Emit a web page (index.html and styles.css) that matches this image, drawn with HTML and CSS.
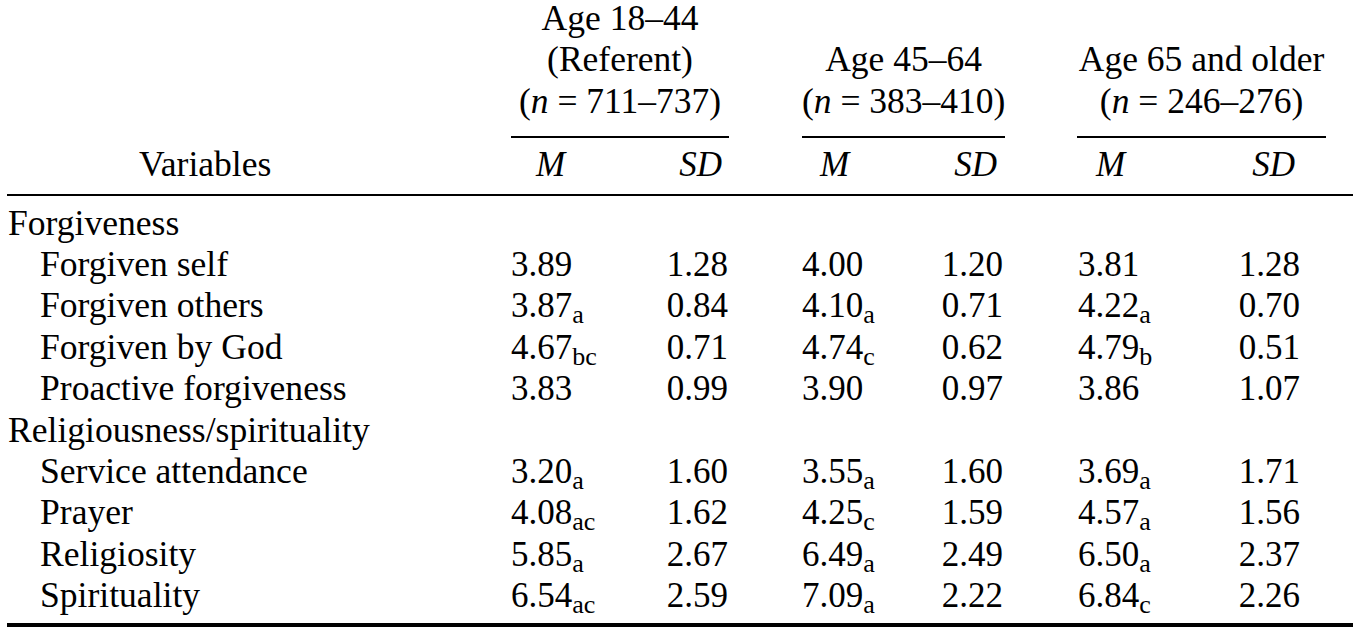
FILE: index.html
```html
<!DOCTYPE html>
<html lang="en">
<head>
<meta charset="utf-8">
<title>Forgiveness and religiousness by age group</title>
<link rel="stylesheet" href="styles.css">
</head>
<body>
<table class="stats">
  <colgroup>
    <col class="c-stub">
    <col class="c-m1"><col class="c-sd1"><col class="c-gap1">
    <col class="c-m2"><col class="c-sd2"><col class="c-gap2">
    <col class="c-m3"><col class="c-sd3"><col class="c-end">
  </colgroup>
  <thead>
    <tr class="group-row">
      <th></th>
      <th colspan="2" class="group g1">Age 18–44<br>(Referent)<br>(<i>n</i> = 711–737)</th>
      <th></th>
      <th colspan="2" class="group g2">Age 45–64<br>(<i>n</i> = 383–410)</th>
      <th></th>
      <th colspan="2" class="group g3">Age 65 and older<br>(<i>n</i> = 246–276)</th>
      <th></th>
    </tr>
    <tr class="stat-row">
      <th class="var-head">Variables</th>
      <th class="mh mh1">M</th><th class="sdh sdh1">SD</th><th></th>
      <th class="mh mh2">M</th><th class="sdh sdh2">SD</th><th></th>
      <th class="mh mh3">M</th><th class="sdh sdh3">SD</th><th></th>
    </tr>
  </thead>
  <tbody>
    <tr class="section first">
      <td class="stub">Forgiveness</td>
      <td></td><td></td><td></td><td></td><td></td><td></td><td></td><td></td><td></td>
    </tr>
    <tr>
      <td class="stub sub">Forgiven self</td>
      <td class="m m1">3.89</td><td class="sd sd1">1.28</td><td></td>
      <td class="m m2">4.00</td><td class="sd sd2">1.20</td><td></td>
      <td class="m m3">3.81</td><td class="sd sd3">1.28</td><td></td>
    </tr>
    <tr>
      <td class="stub sub">Forgiven others</td>
      <td class="m m1">3.87<sub class="s">a</sub></td><td class="sd sd1">0.84</td><td></td>
      <td class="m m2">4.10<sub class="s">a</sub></td><td class="sd sd2">0.71</td><td></td>
      <td class="m m3">4.22<sub class="s">a</sub></td><td class="sd sd3">0.70</td><td></td>
    </tr>
    <tr>
      <td class="stub sub">Forgiven by God</td>
      <td class="m m1">4.67<sub class="s">bc</sub></td><td class="sd sd1">0.71</td><td></td>
      <td class="m m2">4.74<sub class="s">c</sub></td><td class="sd sd2">0.62</td><td></td>
      <td class="m m3">4.79<sub class="s">b</sub></td><td class="sd sd3">0.51</td><td></td>
    </tr>
    <tr>
      <td class="stub sub">Proactive forgiveness</td>
      <td class="m m1">3.83</td><td class="sd sd1">0.99</td><td></td>
      <td class="m m2">3.90</td><td class="sd sd2">0.97</td><td></td>
      <td class="m m3">3.86</td><td class="sd sd3">1.07</td><td></td>
    </tr>
    <tr class="section">
      <td class="stub">Religiousness/spirituality</td>
      <td></td><td></td><td></td><td></td><td></td><td></td><td></td><td></td><td></td>
    </tr>
    <tr>
      <td class="stub sub">Service attendance</td>
      <td class="m m1">3.20<sub class="s">a</sub></td><td class="sd sd1">1.60</td><td></td>
      <td class="m m2">3.55<sub class="s">a</sub></td><td class="sd sd2">1.60</td><td></td>
      <td class="m m3">3.69<sub class="s">a</sub></td><td class="sd sd3">1.71</td><td></td>
    </tr>
    <tr>
      <td class="stub sub">Prayer</td>
      <td class="m m1">4.08<sub class="s">ac</sub></td><td class="sd sd1">1.62</td><td></td>
      <td class="m m2">4.25<sub class="s">c</sub></td><td class="sd sd2">1.59</td><td></td>
      <td class="m m3">4.57<sub class="s">a</sub></td><td class="sd sd3">1.56</td><td></td>
    </tr>
    <tr>
      <td class="stub sub">Religiosity</td>
      <td class="m m1">5.85<sub class="s">a</sub></td><td class="sd sd1">2.67</td><td></td>
      <td class="m m2">6.49<sub class="s">a</sub></td><td class="sd sd2">2.49</td><td></td>
      <td class="m m3">6.50<sub class="s">a</sub></td><td class="sd sd3">2.37</td><td></td>
    </tr>
    <tr class="last">
      <td class="stub sub">Spirituality</td>
      <td class="m m1">6.54<sub class="s">ac</sub></td><td class="sd sd1">2.59</td><td></td>
      <td class="m m2">7.09<sub class="s">a</sub></td><td class="sd sd2">2.22</td><td></td>
      <td class="m m3">6.84<sub class="s">c</sub></td><td class="sd sd3">2.26</td><td></td>
    </tr>
  </tbody>
</table>
</body>
</html>
```
FILE: styles.css
```css
html, body {
  margin: 0;
  padding: 0;
  background: #fff;
}

body {
  font-family: "Liberation Serif", "Times New Roman", serif;
  font-size: 35px;
  line-height: 41.4px;
  color: #000;
}

.stats {
  margin: -2px 0 0 7px;
  width: 1346px;
  table-layout: fixed;
  border-collapse: separate;
  border-spacing: 0;
}

.c-stub { width: 504px; }
.c-m1 { width: 109px; }
.c-sd1 { width: 109px; }
.c-gap1 { width: 73px; }
.c-m2 { width: 101px; }
.c-sd2 { width: 102px; }
.c-gap2 { width: 72px; }
.c-m3 { width: 113px; }
.c-sd3 { width: 136px; }
.c-end { width: 27px; }

.stats th,
.stats td {
  padding: 0;
  font-weight: normal;
  white-space: nowrap;
}

/* group header row */
.group-row th {
  vertical-align: bottom;
  padding-bottom: 14px;
}

.group-row th.group {
  text-align: center;
  font-size: 35.5px;
  border-bottom: 2px solid #000;
}

.group-row th:not(.group) {
  border-bottom: 2px solid transparent;
}

/* M / SD row */
.stat-row th {
  padding-top: 6px;
  padding-bottom: 8.5px;
  border-bottom: 2px solid #000;
  vertical-align: bottom;
}

.var-head {
  text-align: left;
  font-size: 35.6px;
  padding-left: 132px !important;
}

.mh,
.sdh {
  font-style: italic;
}

.mh { text-align: left; }
.sdh { text-align: right; }

.mh1 { padding-left: 25px !important; }
.mh2 { padding-left: 18px !important; }
.mh3 { padding-left: 19px !important; }

.sdh1 { padding-right: 7px !important; }
.sdh2 { padding-right: 8px !important; }
.sdh3 { padding-right: 31px !important; }

/* body */
.stub {
  text-align: left;
  font-size: 35.6px;
  padding-left: 1px !important;
}

.stub.sub {
  padding-left: 33px !important;
}

.m { text-align: left; }
.m3 { padding-left: 1px !important; }

.sd { text-align: right; }
.sd1 { padding-right: 1px !important; }
.sd2 { padding-right: 2px !important; }
.sd3 { padding-right: 26px !important; }

.first td { padding-top: 6.5px; }

.last td {
  padding-bottom: 6.5px;
  border-bottom: 4px solid #000;
}

.s {
  font-size: 26px;
  line-height: 0;
  vertical-align: -6px;
}
```
